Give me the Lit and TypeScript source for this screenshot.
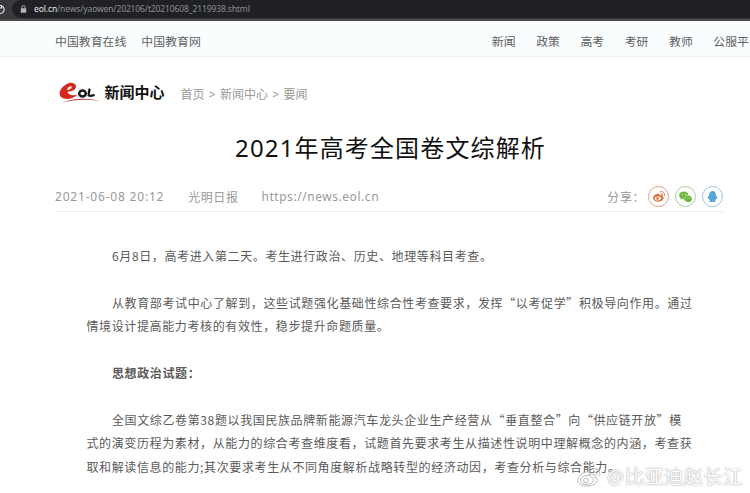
import { css, html, LitElement, svg } from "lit";
import { customElement, property } from "lit/decorators.js";

const NAV = ["新闻", "政策", "高考", "考研", "教师", "公服平"];

const PARAGRAPHS = [
  { lines: ["6月8日，高考进入第二天。考生进行政治、历史、地理等科目考查。"] },
  {
    lines: [
      "从教育部考试中心了解到，这些试题强化基础性综合性考查要求，发挥“以考促学”积极导向作用。通过",
      "情境设计提高能力考核的有效性，稳步提升命题质量。",
    ],
  },
  { bold: true, lines: ["思想政治试题："] },
  {
    lines: [
      "全国文综乙卷第38题以我国民族品牌新能源汽车龙头企业生产经营从“垂直整合”向“供应链开放”模",
      "式的演变历程为素材，从能力的综合考查维度看，试题首先要求考生从描述性说明中理解概念的内涵，考查获",
      "取和解读信息的能力;其次要求考生从不同角度解析战略转型的经济动因，考查分析与综合能力。",
    ],
  },
];

const ICONS = {
  weibo: svg`
    <path fill="#d8703c" fill-rule="evenodd" d="M9.3 7.100c1-.3 1.600.2 1.300 1.300 2-.7 3.600-.2 3.200 1.200 1.300.4 1.800 1.400 1.500 2.400-.5 2.100-2.900 3.400-5.800 3.400-3.200 0-5.300-1.600-5.300-3.700 0-2 2.700-4.300 5.100-4.600zM9.400 10c-2.100.1-3.600 1-3.500 2.300.1 1.200 1.600 1.900 3.500 1.800s3.500-1.100 3.400-2.300c-.1-1.200-1.500-1.900-3.400-1.800z"/>
    <circle cx="9" cy="12.200" r="1.400" fill="#d8703c"/>
    <path fill="none" stroke="#d8703c" stroke-width="1" stroke-linecap="round" d="M12.300 4.800c2.500-.4 4.400 1.400 4 4M12.600 6.800c1.300-.1 2 .8 1.700 1.900"/>`,
  wechat: svg`
    <path fill="#6cb83c" d="M8.300 4.700c-2.900 0-5 1.700-5 4 0 1.300.8 2.400 1.900 3.100l-.5 1.500 1.800-.9c.5.2 1 .2 1.600.2.200-2.500 2.200-4.300 4.900-4.300-.5-2.100-2.400-3.600-4.700-3.600z"/>
    <path fill="#6cb83c" d="M12.700 9c-2.400 0-4.200 1.500-4.200 3.400s1.800 3.400 4.200 3.400c.5 0 1-.1 1.400-.2l1.500.8-.3-1.300c.9-.6 1.500-1.600 1.500-2.700 0-1.900-1.800-3.400-4.100-3.400z"/>
    <g fill="#fff"><circle cx="6.700" cy="7.700" r=".6"/><circle cx="9.800" cy="7.700" r=".6"/><circle cx="11.400" cy="11.500" r=".5"/><circle cx="14" cy="11.500" r=".5"/></g>`,
  qq: svg`
    <path fill="#55a5dc" d="M10 4.200c-2.400 0-3.600 1.800-3.500 4.100-1 1.400-1.900 3.200-1.400 4.500.3.500.8-.1 1.200-.7.200.9.600 1.500 1.100 2-.9.400-1.100 1.500.2 1.700.9.100 1.900-.1 2.400-.6.500.5 1.500.7 2.400.6 1.300-.2 1.100-1.300.2-1.700.5-.5.900-1.100 1.100-2 .4.600.9 1.200 1.200.7.500-1.300-.4-3.100-1.400-4.500.1-2.300-1.100-4.100-3.500-4.100z"/>`,
};

@customElement("share-icon")
class ShareIcon extends LitElement {
  @property({ type: String })
  kind: keyof typeof ICONS = "weibo";

  static styles = css`
    :host {
      display: block;
      box-sizing: border-box;
      width: 21px;
      height: 21px;
      border: 1px solid #d8a083;
      border-radius: 50%;
    }
    :host([kind="wechat"]) {
      border-color: #b0cb98;
    }
    :host([kind="qq"]) {
      border-color: #9ac3df;
    }
    svg {
      display: block;
      width: 19px;
      height: 19px;
    }
  `;

  render() {
    return html`<svg viewBox="0 0 20 20">${ICONS[this.kind]}</svg>`;
  }
}

@customElement("app-root")
class AppRoot extends LitElement {
  static styles = css`
    * {
      margin: 0;
      padding: 0;
      box-sizing: border-box;
    }
    :host {
      display: block;
      position: relative;
      width: 750px;
      height: 493px;
      overflow: hidden;
      background: #fff;
      color: #5a5a5a;
      font-family: "Noto Sans", "Noto Sans CJK SC", sans-serif;
      white-space: nowrap;
    }

    .browser {
      display: flex;
      height: 21px;
      background: #3a3a3d;
      border-bottom: 2px solid #4b4b4d;
    }
    .reload {
      width: 12px;
      height: 18px;
      flex: none;
    }
    .address {
      display: flex;
      flex: 1;
      align-items: center;
      height: 18px;
      padding-left: 8px;
      background: #202126;
      border-radius: 9px 0 0 9px;
      color: #8d8e91;
      font-size: 8.5px;
      letter-spacing: -0.12px;
      line-height: 18px;
    }
    .address svg {
      width: 7px;
      height: 8px;
      margin-right: 7px;
    }
    .address b {
      color: #e5e5e7;
      font-weight: 400;
    }

    .topbar {
      display: flex;
      height: 36px;
      padding: 0 0 0 55px;
      background: #fafdfe;
      border-bottom: 1px solid #eeeff1;
      color: #606060;
      font-size: 11.9px;
      line-height: 40px;
    }
    .topbar a + a {
      margin-left: 15px;
    }
    .topbar nav {
      display: flex;
      gap: 20.5px;
      margin-left: 291px;
    }
    .topbar nav a {
      margin: 0;
    }

    .crumbs {
      display: flex;
      align-items: center;
      height: 50px;
      margin-top: 11px;
      padding-left: 58px;
    }
    .logo {
      width: 45px;
      height: 24px;
    }
    .channel {
      margin-left: 1.5px;
      color: #111;
      font-size: 15px;
      font-weight: 700;
      line-height: 22px;
      padding-bottom: 3px;
    }
    .path {
      margin-left: 16px;
      color: #999;
      font-size: 12px;
      word-spacing: 1.2px;
      padding-top: 2px;
    }

    h1 {
      margin-left: 235px;
      margin-top: 9px;
      height: 42px;
      color: #111;
      font-size: 24px;
      font-weight: 400;
      letter-spacing: 1.15px;
      line-height: 42px;
    }

    .meta {
      display: flex;
      align-items: center;
      width: 668px;
      height: 31px;
      margin: 12px 0 0 55px;
      padding-top: 1px;
      border-bottom: 1px solid #eee;
      color: #999;
      font-size: 12px;
      letter-spacing: 0.55px;
    }
    .date {
      letter-spacing: 0.8px;
    }
    .source {
      margin: 0 23px 0 24px;
    }
    .share {
      display: flex;
      align-items: center;
      gap: 6px;
      margin-left: auto;
    }
    .share span {
      margin-right: -3px;
    }

    article {
      padding: 32px 0 0 86.5px;
      font-family: "Noto Sans CJK SC", sans-serif;
      font-size: 12px;
      letter-spacing: 0.62px;
      line-height: 23.4px;
    }
    .para {
      margin-bottom: 23.4px;
    }
    .para div:first-child {
      padding-left: 25.5px;
    }
    .bold {
      font-weight: 700;
    }

    .watermark {
      position: absolute;
      left: 576px;
      top: 464px;
      display: flex;
      align-items: center;
      color: #fff;
      font-size: 19.2px;
      letter-spacing: 0.5px;
      line-height: 26px;
      text-shadow: 0 0 1px #999, 0 0 2px #c4c4c4;
    }
    .watermark svg {
      width: 26px;
      height: 22px;
      margin-right: 5px;
    }
  `;

  render() {
    return html`
      <div class="browser">
        <svg class="reload" viewBox="0 0 12 18">
          <path d="M-3 7a4 4 0 1 1 0 5M1.500 5v3h-3" fill="none" stroke="#ddd" stroke-width="1.200" />
        </svg>
        <div class="address">
          <svg viewBox="0 0 7 8">
            <rect x=".8" y="3.200" width="5.400" height="4.500" rx=".5" fill="#b6b6b8" />
            <path d="M2 3.500V2.100a1.500 1.500 0 0 1 3 0v1.400" fill="none" stroke="#b6b6b8" stroke-width=".9" />
          </svg>
          <b>eol.cn</b>/news/yaowen/202106/t20210608_2119938.shtml
        </div>
      </div>
      <div class="topbar">
        <a>中国教育在线</a><a>中国教育网</a>
        <nav>${NAV.map((item) => html`<a>${item}</a>`)}</nav>
      </div>
      <div class="crumbs">
        ${this.renderLogo()}
        <span class="channel">新闻中心</span>
        <span class="path">首页 &gt; 新闻中心 &gt; 要闻</span>
      </div>
      <h1>2021年高考全国卷文综解析</h1>
      <div class="meta">
        <span class="date">2021-06-08 20:12</span>
        <span class="source">光明日报</span>
        <span>https://news.eol.cn</span>
        <div class="share">
          <span>分享：</span>
          <share-icon kind="weibo"></share-icon>
          <share-icon kind="wechat"></share-icon>
          <share-icon kind="qq"></share-icon>
        </div>
      </div>
      <article lang="zh-CN">
        ${PARAGRAPHS.map(
          (p) => html`<div class="para ${p.bold ? "bold" : ""}">
            ${p.lines.map((line) => html`<div>${line}</div>`)}
          </div>`
        )}
      </article>
      <div class="watermark">
        <svg viewBox="0 0 26 22" fill="#fff" stroke="#aaa" stroke-width=".8">
          <path d="M10 6c2-1 4 0 3 3 4-1.500 7-.5 6 2.500 3 1 3 3.500 1 5.500-4 4-14 4-17.500 0C-.5 13 5 7.500 10 6z" />
          <ellipse cx="11" cy="14" rx="6.500" ry="4.500" />
          <circle cx="10" cy="14.500" r="2.300" />
          <path d="M17 3c4-1 8 2 6.500 7M17.500 6c2-.5 4 1 3.200 3.500" fill="none" />
        </svg>
        <span>@比亚迪赵长江</span>
      </div>
    `;
  }

  renderLogo() {
    return html`<svg class="logo" viewBox="0 0 45 24">
      <path
        fill="#d5281f"
        fill-rule="evenodd"
        d="M8 3.500C12 .5 18 1.500 18 5.500c0 3-3.500 5-8.500 5.300C10 14 14.500 15 19.500 13.500c-4 4.500-12 5.700-15.800 3C-.5 13.500 2 7 8 3.500zM9 9c3 0 5.200-1.800 4.600-3.200S9.500 6 9 9z"
      />
      <path d="M5 21.500C15 16.500 30 17 42 20 29 18 16 18.500 5 21.500z" fill="#c5423a" />
      <ellipse cx="24.500" cy="12.500" rx="3.300" ry="3" fill="none" stroke="#181818" stroke-width="2.500" />
      <path
        d="M31.500 8.500c-.6 2.500-1 4-.8 6 1.500.6 3 .4 5-.3"
        fill="none"
        stroke="#181818"
        stroke-width="2.300"
        stroke-linecap="round"
      />
    </svg>`;
  }
}
